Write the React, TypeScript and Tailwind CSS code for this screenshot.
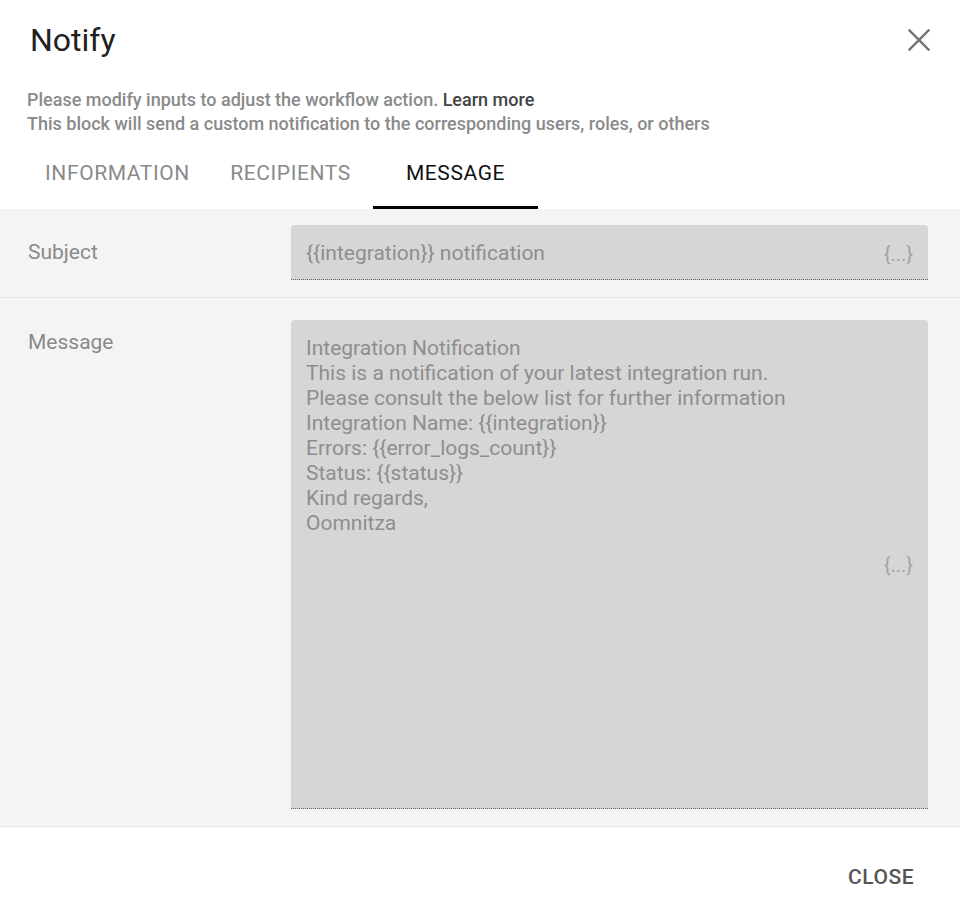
import React from "react";

const font = { fontFamily: "Roboto, 'Noto Sans', sans-serif" };

const messageLines = [
    "Integration Notification",
    "This is a notification of your latest integration run.",
    "Please consult the below list for further information",
    "Integration Name: {{integration}}",
    "Errors: {{error_logs_count}}",
    "Status: {{status}}",
    "Kind regards,",
    "Oomnitza",
];

const tabs = [
    { label: "INFORMATION", width: "w-[185px] pl-[4px]", active: false },
    { label: "RECIPIENTS", width: "w-[165px]", active: false },
    { label: "MESSAGE", width: "w-[165px]", active: true },
];

export default function App() {
    return (
        <div className="w-[960px] h-[905px] bg-white flex flex-col overflow-hidden" style={font}>
            {/* header */}
            <div className="flex items-center justify-between pl-[30px] pr-[28px] pt-[18px] h-[62px]">
                <h1 className="text-[32px] leading-[40px] text-[#212121] font-normal">Notify</h1>
                <button className="text-[#757575]">
                    <svg width="26" height="26" viewBox="0 0 24 24" fill="none">
                        <path d="M2.5 2.5L21.5 21.5M21.5 2.5L2.5 21.5" stroke="currentColor" strokeWidth="2.2" />
                    </svg>
                </button>
            </div>

            {/* description */}
            <div className="pl-[27px] pt-[26px] text-[18px] leading-[24px] font-medium text-[#8a8a8a]">
                <p>
                    Please modify inputs to adjust the workflow action. <span className="text-[#444]">Learn more</span>
                </p>
                <p>This block will send a custom notification to the corresponding users, roles, or others</p>
            </div>

            {/* tabs */}
            <div className="flex pl-[23px] mt-[11px] h-[62px]">
                {tabs.map((t) => (
                    <div
                        key={t.label}
                        className={`${t.width} flex flex-col items-center justify-between`}
                    >
                        <span
                            className={`pt-[14px] text-[21px] leading-[24px] tracking-[0.6px] ${
                                t.active ? "text-[#111]" : "text-[#8a8a8a]"
                            }`}
                        >
                            {t.label}
                        </span>
                        <div className={`h-[3px] w-full ${t.active ? "bg-black" : "bg-transparent"}`} />
                    </div>
                ))}
            </div>

            {/* form */}
            <div className="bg-[#f4f4f4] flex flex-col border-b border-[#e6e6e6]">
                <div className="flex pt-[16px] pb-[17px] border-b border-[#e4e4e4]">
                    <div className="w-[291px] pl-[28px] pt-[14px] text-[21px] leading-[26px] text-[#8a8a8a]">Subject</div>
                    <div className="w-[637px] h-[55px] bg-[#d6d6d6] rounded-t-[4px] border-b border-dotted border-[#666] flex items-center justify-between pl-[15px] pr-[15px] pt-[3px]">
                        <span className="text-[21px] text-[#8e8e8e]">{"{{integration}} notification"}</span>
                        <span className="text-[20px] text-[#a3a3a3]">{"{...}"}</span>
                    </div>
                </div>
                <div className="flex pt-[22px] pb-[17px]">
                    <div className="w-[291px] pl-[28px] pt-[9px] text-[21px] leading-[26px] text-[#8a8a8a]">Message</div>
                    <div className="w-[637px] h-[489px] bg-[#d6d6d6] rounded-t-[4px] border-b border-dotted border-[#666] flex flex-col pl-[15px] pr-[15px] pt-[16px]">
                        {messageLines.map((l) => (
                            <div key={l} className="text-[21px] leading-[25px] text-[#8e8e8e]">
                                {l}
                            </div>
                        ))}
                        <div className="self-end mt-[17px] text-[20px] leading-[25px] text-[#a3a3a3]">{"{...}"}</div>
                    </div>
                </div>
            </div>

            {/* footer */}
            <div className="flex justify-end pr-[46px] pt-[37px]">
                <button className="text-[21px] leading-[26px] font-medium tracking-[0.5px] text-[#555]">CLOSE</button>
            </div>
        </div>
    );
}
